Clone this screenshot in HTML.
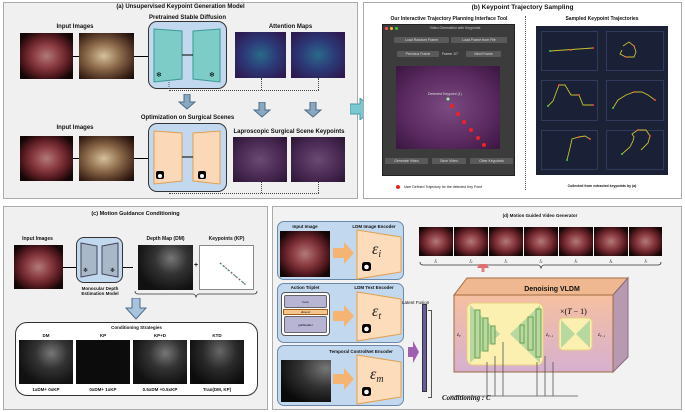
<!DOCTYPE html>
<html><head><meta charset="utf-8"><style>
*{margin:0;padding:0;box-sizing:border-box}
body{width:685px;height:412px;background:#fff;position:relative;overflow:hidden;font-family:"Liberation Sans",sans-serif;color:#111}
div,span,svg{position:absolute}
.t{font-weight:bold;font-size:6px;white-space:nowrap;text-align:center}
.sur{background:radial-gradient(ellipse at 50% 50%,#b27a78 0%,#8a3c42 35%,#5a1c22 60%,#150606 85%)}
.sur2{background:radial-gradient(ellipse at 45% 50%,#d6c09a 0%,#8c6a4a 40%,#3a2016 80%,#100806 100%)}
.att{background:radial-gradient(ellipse at 50% 50%,#2a6a8a 0%,#2c3a78 45%,#2e1a50 90%)}
.kp{background:radial-gradient(ellipse at 50% 50%,#6a4a72 0%,#4a2a54 55%,#2a1432 100%)}
.dm{background:radial-gradient(ellipse at 60% 30%,#777 0%,#333 35%,#111 75%)}
.blk{background:#0c0c0c}
.btn{background:#5a5a5a;color:#ddd;font-size:3.5px;text-align:center;line-height:6px;height:6px;border-radius:1px}
.cell{border:1px solid #2f3a5c;background:#1a2036}
.blue{background:#c2d8ee;border:1px solid #6a88aa;border-radius:7px}
</style></head><body>

<!-- panel a -->
<div style="left:3px;top:2px;width:355px;height:197px;background:#f0f0f0;border:1px solid #aaa"></div>
<div class="t" style="left:3px;top:4px;width:355px">(a) Unsupervised Keypoint Generation Model</div>
<div class="t" style="left:45px;top:24px;width:60px">Input Images</div>
<div class="sur" style="left:20px;top:33px;width:53px;height:46px"></div>
<div class="sur2" style="left:79px;top:33px;width:55px;height:46px"></div>
<div style="left:73px;top:56px;width:6px;height:1px;background:#000"></div>
<div style="left:134px;top:56px;width:20px;height:1px;background:#000"></div>
<div class="t" style="left:140px;top:15px;width:95px">Pretrained Stable Diffusion</div>
<div class="blue" style="left:148px;top:21px;width:79px;height:68px;border-color:#333;border-radius:9px"></div>
<svg style="left:148px;top:21px" width="79" height="68"><path d="M6 8 L34 10 L34 58 L6 61Z" fill="#7dccc8" stroke="#3a9a98"/><path d="M45 10 L72 8 L72 61 L45 58Z" fill="#7dccc8" stroke="#3a9a98"/><path d="M34 34 L45 34" stroke="#000"/><text x="8" y="56" font-size="7">❄</text><text x="61" y="56" font-size="7">❄</text><path d="M21 61 V70" stroke="#555" stroke-dasharray="1,1"/></svg>
<div class="t" style="left:235px;top:24px;width:111px">Attention Maps</div>
<div class="att" style="left:235px;top:32px;width:51px;height:46px"></div>
<div class="att" style="left:291px;top:32px;width:54px;height:46px"></div>
<div style="left:169px;top:90px;width:150px;height:1px;border-top:1px dotted #444"></div>
<div style="left:261px;top:78px;height:12px;border-left:1px dotted #444"></div>
<div style="left:318px;top:78px;height:12px;border-left:1px dotted #444"></div>
<svg style="left:178px;top:94px" width="18" height="16"><path d="M6 0h6v8h5L9 15 1 8h5z" fill="#8aa8c0" stroke="#4a6a88"/></svg>
<svg style="left:253px;top:102px" width="18" height="16"><path d="M6 0h6v8h5L9 15 1 8h5z" fill="#8aa8c0" stroke="#4a6a88"/></svg>
<svg style="left:304px;top:102px" width="18" height="16"><path d="M6 0h6v8h5L9 15 1 8h5z" fill="#8aa8c0" stroke="#4a6a88"/></svg>
<svg style="left:350px;top:98px" width="24" height="22"><path d="M0 6h10V0l12 11-12 11v-6H0z" fill="#7cc8d2" stroke="#4a9aa8"/></svg>
<div class="t" style="left:140px;top:115px;width:95px">Optimization on Surgical Scenes</div>
<div class="t" style="left:45px;top:125px;width:60px">Input Images</div>
<div class="sur" style="left:20px;top:136px;width:53px;height:45px"></div>
<div class="sur2" style="left:79px;top:136px;width:55px;height:45px"></div>
<div style="left:73px;top:158px;width:6px;height:1px;background:#000"></div>
<div style="left:134px;top:158px;width:20px;height:1px;background:#000"></div>
<div class="blue" style="left:148px;top:123px;width:79px;height:69px;border-color:#333;border-radius:9px"></div>
<svg style="left:148px;top:123px" width="79" height="69"><path d="M6 8 L34 10 L34 58 L6 61Z" fill="#fbd9b8" stroke="#e0a050"/><path d="M45 10 L72 8 L72 61 L45 58Z" fill="#fbd9b8" stroke="#e0a050"/><path d="M34 34 L45 34" stroke="#000"/><rect x="8" y="48" width="8" height="8" rx="2" fill="#000"/><circle cx="12" cy="53" r="2" fill="#fff"/><rect x="50" y="48" width="8" height="8" rx="2" fill="#000"/><circle cx="54" cy="53" r="2" fill="#fff"/></svg>
<div class="t" style="left:233px;top:129px;width:112px">Laproscopic Surgical Scene Keypoints</div>
<div class="kp" style="left:233px;top:137px;width:54px;height:45px"></div>
<div class="kp" style="left:291px;top:137px;width:54px;height:45px"></div>
<div style="left:169px;top:193px;width:150px;height:1px;border-top:1px dotted #444"></div>
<div style="left:261px;top:182px;height:11px;border-left:1px dotted #444"></div>
<div style="left:318px;top:182px;height:11px;border-left:1px dotted #444"></div>

<!-- panel b -->
<div style="left:363px;top:2px;width:319px;height:197px;background:#fff;border:1px solid #aaa"></div>
<div class="t" style="left:363px;top:4px;width:319px;font-size:6.5px">(b) Keypoint Trajectory Sampling</div>
<div class="t" style="left:380px;top:16px;width:138px;font-size:5px">Our Interactive Trajectory Planning Interface Tool</div>
<div class="t" style="left:536px;top:16px;width:132px;font-size:5px">Sampled Keypoint Trajectories</div>
<div style="left:382px;top:24px;width:133px;height:152px;background:#3c3c3c;border:1px solid #222"></div>
<div style="left:385px;top:27px;width:3px;height:3px;border-radius:50%;background:#f55"></div>
<div style="left:390px;top:27px;width:3px;height:3px;border-radius:50%;background:#fb3"></div>
<div style="left:395px;top:27px;width:3px;height:3px;border-radius:50%;background:#3c3"></div>
<div style="left:400px;top:26px;width:110px;font-size:3.5px;color:#ccc;text-align:center">Video Generation with Keypoints</div>
<div class="btn" style="left:394px;top:37px;width:55px">Load Random Frame</div>
<div class="btn" style="left:451px;top:37px;width:56px">Load Frame from File</div>
<div class="btn" style="left:397px;top:51px;width:42px">Previous Frame</div>
<div style="left:442px;top:51px;font-size:3.5px;color:#ddd;line-height:6px">Frame 1/7</div>
<div class="btn" style="left:466px;top:51px;width:35px">Next Frame</div>
<div class="kp" style="left:396px;top:66px;width:104px;height:83px;background:radial-gradient(ellipse at 50% 50%,#7a4a80 0%,#5a2a60 60%,#3a1640 100%)"></div>
<div style="left:428px;top:92px;font-size:3.5px;color:#ddd">Detected Keypoint (1)</div>
<svg style="left:396px;top:66px" width="104" height="83"><circle cx="52" cy="33" r="1.5" fill="#9f9"/><g fill="#e22"><circle cx="56" cy="40" r="2"/><circle cx="62" cy="48" r="2"/><circle cx="68" cy="56" r="2"/><circle cx="75" cy="64" r="2"/><circle cx="82" cy="72" r="2"/><circle cx="88" cy="79" r="2"/></g></svg>
<div class="btn" style="left:385px;top:158px;width:43px">Generate Video</div>
<div class="btn" style="left:432px;top:158px;width:34px">Save Video</div>
<div class="btn" style="left:470px;top:158px;width:43px">Clear Keypoints</div>
<div style="left:396px;top:185px;width:4px;height:4px;border-radius:50%;background:#e22"></div>
<div style="left:404px;top:185px;font-size:3.5px;line-height:4px;white-space:nowrap">User Defined Trajectory for the detected Key Point</div>
<div style="left:525px;top:16px;height:174px;border-left:1px dotted #555"></div>
<div style="left:536px;top:26px;width:132px;height:149px;background:#1c2236"></div>
<div class="cell" style="left:541px;top:31px;width:57px;height:40px"></div>
<div class="cell" style="left:606px;top:31px;width:58px;height:40px"></div>
<div class="cell" style="left:541px;top:80px;width:57px;height:41px"></div>
<div class="cell" style="left:606px;top:80px;width:58px;height:41px"></div>
<div class="cell" style="left:541px;top:130px;width:57px;height:40px"></div>
<div class="cell" style="left:606px;top:130px;width:58px;height:40px"></div>
<svg style="left:536px;top:26px" width="132" height="149" fill="none" stroke="#c8c030" stroke-width=".9"><path d="M14 25 L57 22"/><path d="M87 20 L93 16 L98 20 L100 26 L98 31 L90 31 L84 28 L86 24"/><path d="M12 80 L17 75 L23 59 L29 59 L35 69 L43 69 L47 79 L57 79"/><path d="M77 82 L82 74 L90 69 L98 66 L106 66 L112 69 L119 74"/><path d="M31 134 L34 122 L36 113 L43 111 L49 110 L54 113"/><path d="M86 128 L94 121 L97 115 L98 111 L96 108 L102 104 L110 104 L114 110 L112 117 L105 124"/></svg>
<svg style="left:536px;top:26px" width="132" height="149" fill="#e44"><circle cx="14" cy="25" r="1" fill="#4c4"/><circle cx="35" cy="24" r="1"/><circle cx="57" cy="22" r="1"/><circle cx="98" cy="20" r="1"/><circle cx="90" cy="31" r="1"/><circle cx="12" cy="80" r="1" fill="#4c4"/><circle cx="23" cy="59" r="1"/><circle cx="43" cy="69" r="1"/><circle cx="57" cy="79" r="1"/><circle cx="77" cy="82" r="1" fill="#4c4"/><circle cx="98" cy="66" r="1"/><circle cx="119" cy="74" r="1"/><circle cx="31" cy="134" r="1" fill="#4c4"/><circle cx="43" cy="111" r="1"/><circle cx="54" cy="113" r="1"/><circle cx="86" cy="128" r="1" fill="#4c4"/><circle cx="102" cy="104" r="1"/><circle cx="114" cy="110" r="1"/></svg>
<div style="left:536px;top:184px;width:132px;font-size:3.5px;text-align:center;font-weight:bold">Collected from extracted keypoints by (a)</div>

<!-- panel c -->
<div style="left:3px;top:206px;width:265px;height:204px;background:#f0f0f0;border:1px solid #aaa"></div>
<div class="t" style="left:3px;top:211px;width:265px;font-size:5.5px">(c) Motion Guidance Conditioning</div>
<div class="t" style="left:10px;top:236px;width:55px;font-size:5px">Input Images</div>
<div class="sur" style="left:14px;top:245px;width:49px;height:44px"></div>
<div style="left:63px;top:267px;width:13px;height:1px;background:#000"></div>
<div class="blue" style="left:76px;top:237px;width:47px;height:46px;border-color:#333;border-radius:8px"></div>
<svg style="left:76px;top:237px" width="47" height="46"><path d="M5 6 L21 9 L21 37 L5 40Z" fill="#a8b8c8" stroke="#445"/><path d="M26 9 L42 6 L42 40 L26 37Z" fill="#a8b8c8" stroke="#445"/><text x="7" y="35" font-size="6">❄</text><text x="34" y="35" font-size="6">❄</text></svg>
<div style="left:123px;top:267px;width:10px;height:1px;background:#000"></div>
<div class="t" style="left:76px;top:286px;width:48px;font-size:4.5px;line-height:5px">Monocular Depth<br>Estimation Model</div>
<div class="t" style="left:138px;top:236px;width:55px;font-size:5px">Depth Map (DM)</div>
<div class="t" style="left:199px;top:236px;width:55px;font-size:5px">Keypoints (KP)</div>
<div class="dm" style="left:138px;top:245px;width:55px;height:45px"></div>
<div class="t" style="left:193px;top:262px;width:6px;font-size:7px">+</div>
<div style="left:199px;top:245px;width:55px;height:45px;background:#fff;border:1px solid #888"></div>
<svg style="left:199px;top:245px" width="55" height="45"><path d="M21 18 L47 40" stroke="#3a9a98" stroke-width="1.3" stroke-dasharray="2,1.5"/><path d="M21 18 L47 40" stroke="#c33" stroke-width="1.3" stroke-dasharray="1,4"/></svg>
<svg style="left:134px;top:290px" width="124" height="10"><path d="M1 1 Q1 4 4 4 H59 Q61 4 62 7 Q63 4 65 4 H120 Q123 4 123 1" fill="none" stroke="#333" stroke-width=".8"/></svg>
<svg style="left:125px;top:298px" width="22" height="22"><path d="M7 0h8v10h6L11 21 1 10h6z" fill="#a8c4dc" stroke="#4a6a88"/></svg>
<div style="left:15px;top:322px;width:243px;height:74px;background:#fff;border:1px solid #333;border-radius:12px"></div>
<div class="t" style="left:15px;top:325px;width:243px;font-size:4.5px">Conditioning Strategies</div>
<div class="t" style="left:19px;top:333px;width:54px;font-size:4.5px">DM</div>
<div class="t" style="left:76px;top:333px;width:54px;font-size:4.5px">KP</div>
<div class="t" style="left:133px;top:333px;width:54px;font-size:4.5px">KP+D</div>
<div class="t" style="left:190px;top:333px;width:54px;font-size:4.5px">KTD</div>
<div class="dm" style="left:19px;top:340px;width:54px;height:44px"></div>
<div class="blk" style="left:76px;top:340px;width:54px;height:44px"></div>
<div class="dm" style="left:133px;top:340px;width:54px;height:44px"></div>
<div style="left:190px;top:340px;width:54px;height:44px;background:radial-gradient(ellipse at 55% 25%,#666 0%,#2a2a2a 40%,#0c0c0c 80%)"></div>
<div class="t" style="left:19px;top:387px;width:54px;font-size:4.5px">1xDM+ 0xKP</div>
<div class="t" style="left:76px;top:387px;width:54px;font-size:4.5px">0xDM+ 1xKP</div>
<div class="t" style="left:133px;top:387px;width:54px;font-size:4.5px">0.5xDM +0.5xKP</div>
<div class="t" style="left:190px;top:387px;width:54px;font-size:4.5px">Tran(DM, KP)</div>

<!-- panel d -->
<div style="left:272px;top:206px;width:410px;height:204px;background:#f2f2f2;border:1px solid #aaa"></div>
<div class="t" style="left:420px;top:213px;width:240px;font-size:4.5px">(d) Motion Guided Video Generator</div>
<div class="blue" style="left:277px;top:221px;width:127px;height:59px"></div>
<div class="blue" style="left:277px;top:283px;width:127px;height:60px"></div>
<div class="blue" style="left:277px;top:345px;width:127px;height:61px"></div>
<div class="t" style="left:280px;top:224px;width:50px;font-size:4.5px">Input Image</div>
<div class="t" style="left:344px;top:224px;width:60px;font-size:4.5px">LDM Image Encoder</div>
<div class="sur" style="left:280px;top:231px;width:50px;height:46px"></div>
<div class="t" style="left:280px;top:285px;width:50px;font-size:4.5px">Action Triplet</div>
<div class="t" style="left:344px;top:285px;width:60px;font-size:4.5px">LDM Text Encoder</div>
<div style="left:281px;top:292px;width:49px;height:44px;background:#fff;border:1px solid #555;border-radius:4px"></div>
<div style="left:284px;top:295px;width:43px;height:13px;background:#b8b4d4;border:1px solid #666;border-radius:2px;font-size:3px;text-align:center;line-height:12px">hook</div>
<div style="left:283px;top:309px;width:45px;height:6px;background:#f4c48a;border:1px solid #a06020;font-size:3px;text-align:center;line-height:5px">dissect</div>
<div style="left:284px;top:316px;width:43px;height:17px;background:#b8b4d4;border:1px solid #666;border-radius:2px;font-size:3px;text-align:center;line-height:16px">gallbladder</div>
<div class="t" style="left:318px;top:349px;width:86px;font-size:4.5px">Temporal ControlNet Encoder</div>
<div class="dm" style="left:281px;top:360px;width:50px;height:42px;background:radial-gradient(ellipse at 90% 20%,#777 0%,#333 40%,#0a0a0a 80%)"></div>
<svg style="left:330px;top:220px" width="80" height="190">
<g fill="#f6b472"><path d="M3 28h11v-6l10 11-10 11v-6H3z"/><path d="M3 91h11v-6l10 11-10 11v-6H3z"/><path d="M3 154h11v-6l10 11-10 11v-6H3z"/></g>
<g fill="#fcdcba" stroke="#e0a050"><path d="M27 10 L71 17 L71 52 L27 59Z"/><path d="M27 72 L71 79 L71 114 L27 121Z"/><path d="M27 135 L71 142 L71 177 L27 184Z"/></g>
<g font-family="Liberation Serif" font-style="italic" font-size="16" fill="#222"><text x="42" y="34">ε<tspan font-size="10" dy="3">i</tspan></text><text x="42" y="96">ε<tspan font-size="10" dy="3">t</tspan></text><text x="40" y="159">ε<tspan font-size="10" dy="3">m</tspan></text></g>
<g><rect x="32" y="42" width="9" height="9" rx="2.5"/><rect x="32" y="104" width="9" height="9" rx="2.5"/><rect x="32" y="167" width="9" height="9" rx="2.5"/><g fill="#fff"><circle cx="36.5" cy="47" r="2.3"/><circle cx="36.5" cy="109" r="2.3"/><circle cx="36.5" cy="172" r="2.3"/></g></g>
</svg>
<svg style="left:408px;top:340px" width="12" height="24"><path d="M0 7h5V1l6 11-6 11v-6H0z" fill="#a060b0"/></svg>
<div style="left:402px;top:300px;font-size:4.5px;white-space:nowrap">Latent Fusion</div>
<div style="left:422px;top:304px;width:5px;height:88px;background:#6a5aa0;border:1px solid #333"></div>
<div style="left:428px;top:310px;width:4px;height:88px;border:1px solid #555;border-left:none"></div>
<!-- frames -->
<div class="sur" style="left:419px;top:227px;width:34px;height:29px"></div>
<div class="sur" style="left:454px;top:227px;width:34px;height:29px"></div>
<div class="sur" style="left:489px;top:227px;width:34px;height:29px"></div>
<div class="sur" style="left:524px;top:227px;width:34px;height:29px"></div>
<div class="sur" style="left:559px;top:227px;width:34px;height:29px"></div>
<div class="sur" style="left:594px;top:227px;width:34px;height:29px"></div>
<div class="sur" style="left:629px;top:227px;width:33px;height:29px"></div>
<svg style="left:419px;top:257px" width="243" height="14" font-family="Liberation Serif" font-style="italic" font-size="4.5" text-anchor="middle"><text x="17" y="5">f₁</text><text x="52" y="5">f₂</text><text x="87" y="5">f₃</text><text x="122" y="5">f₄</text><text x="157" y="5">f₅</text><text x="192" y="5">f₆</text><text x="227" y="5">f₇</text><path d="M1 5 Q1 8 4 8 H119 Q121 8 122 11 Q123 8 125 8 H239 Q242 8 242 5" fill="none" stroke="#333" stroke-width=".8"/></svg>
<svg style="left:450px;top:264px" width="185" height="145">
<path d="M17 14 L178 14 L163 31 L4 31Z" fill="#f0b890" stroke="#a06a40"/>
<path d="M163 31 L178 14 L178 93 L163 108Z" fill="#b89ab0" stroke="#8a6a80"/>
<defs><linearGradient id="g" x1="0" y1="0" x2="0" y2="1"><stop offset="0" stop-color="#f6c0a0"/><stop offset="1" stop-color="#d6b0d0"/></linearGradient></defs>
<rect x="4" y="31" width="159" height="77" fill="url(#g)" stroke="#a06a40"/>
<path d="M33 -4 v12" stroke="#e08080" stroke-width="3"/><path d="M27 4 L33 -6 L39 4Z" fill="#e07070"/>
<rect x="17" y="39" width="76" height="62" rx="6" fill="#fbf0b0" stroke="#e8d080"/>
<path d="M20 41 L50 70 L20 99Z M90 41 L60 70 L90 99Z" fill="#b8d8a0"/>
<g fill="#b8d8a0" stroke="#6aa050"><rect x="25" y="46" width="5" height="48"/><rect x="33" y="54" width="5" height="33"/><rect x="41" y="62" width="4" height="18"/><rect x="70" y="61" width="4" height="18"/><rect x="78" y="53" width="5" height="33"/><rect x="86" y="45" width="5" height="48"/></g>
<rect x="109" y="54" width="33" height="32" rx="4" fill="#fbf0b0" stroke="#e8d080"/>
<path d="M111 56 L125 70 L111 84Z M140 56 L126 70 L140 84Z" fill="#b8d8a0"/>
<text x="110" y="50" font-family="Liberation Serif" font-size="8">×(<tspan font-style="italic">T</tspan> − 1)</text>
<g font-family="Liberation Serif" font-style="italic" font-size="5"><text x="7" y="72">z<tspan font-size="3" dy="1">T</tspan></text><text x="96" y="72">z<tspan font-size="3" dy="1">T−1</tspan></text><text x="148" y="72">z<tspan font-size="3" dy="1">T−1</tspan></text></g>
<g stroke="#555" stroke-width=".8" fill="none"><path d="M-20 132 H128"/><path d="M-20 128 V132"/><path d="M53 132 V78M45 132 V92M37 132 V98M87 132 V98M95 132 V92M103 132 V98"/></g>
</svg>
<div class="t" style="left:522px;top:286px;width:60px;font-size:7px">Denoising VLDM</div>
<div style="left:442px;top:394px;font-family:'Liberation Serif',serif;font-style:italic;font-weight:bold;font-size:7px;white-space:nowrap">Conditioning : C</div>
</body></html>
